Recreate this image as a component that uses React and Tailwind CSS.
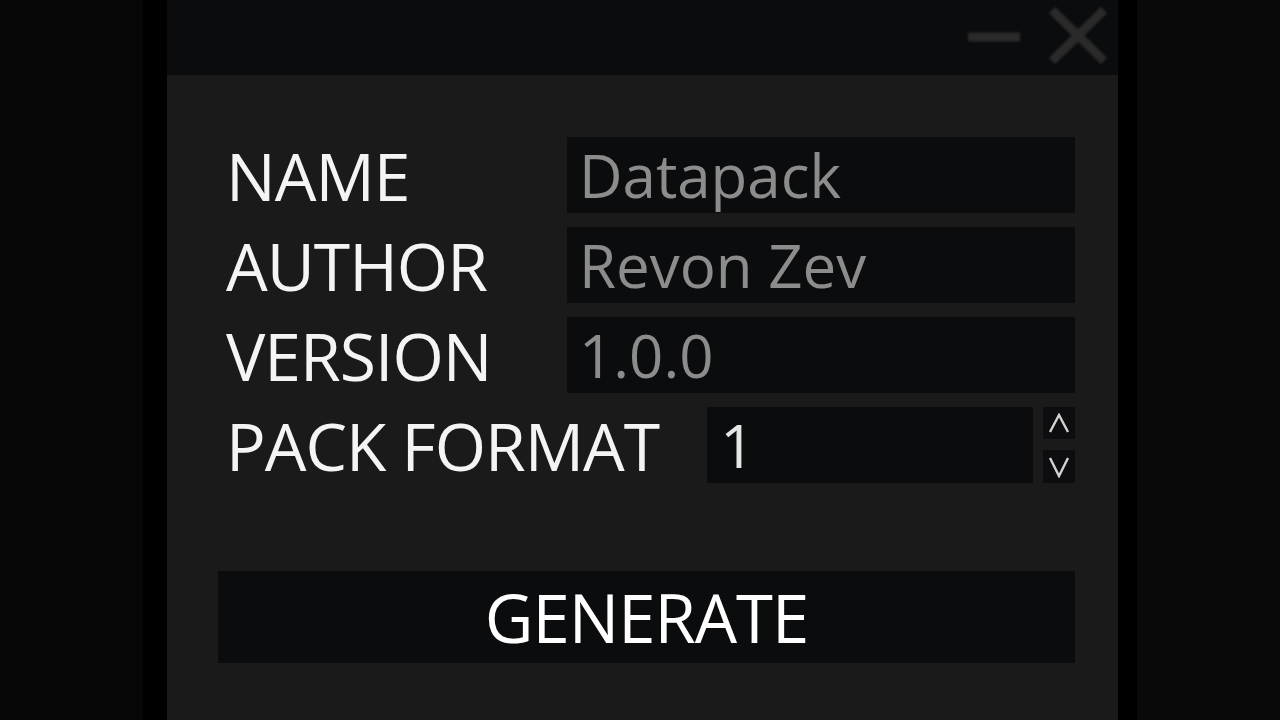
import React from "react";

const font = { fontFamily: '"Open Sans", "Noto Sans", sans-serif' };

function Field({ label, value }) {
  return (
    <div className="flex items-center h-[76px]">
      <div className="w-[349px] pl-[8px] text-[66px] leading-none text-[#f4f4f4] tracking-[-1px]">{label}</div>
      <div className="flex-1 h-full bg-[#0b0c0e] flex items-center pl-[12px] text-[60px] leading-none text-[#8c8c8c]">
        {value}
      </div>
    </div>
  );
}

export default function App() {
  return (
    <div className="flex h-[720px] w-[1280px] bg-black overflow-hidden" style={font}>
      <div className="w-[143px] h-full bg-[#070707]" />
      <div className="w-[24px] h-full bg-black" />
      <div className="w-[951px] h-full flex flex-col">
        <div className="h-[75px] bg-[#0b0c0e] flex items-start justify-end pr-[10px]">
          <svg width="142" height="75" viewBox="0 0 142 75" className="blur-[1px]">
            <line x1="2" y1="37" x2="54" y2="37" stroke="#2a2a2a" strokeWidth="9" />
            <line x1="86" y1="10" x2="138" y2="61" stroke="#2a2a2a" strokeWidth="9" />
            <line x1="138" y1="10" x2="86" y2="61" stroke="#2a2a2a" strokeWidth="9" />
          </svg>
        </div>
        <div className="flex-1 bg-[#1a1a1a] pl-[51px] pr-[43px] pt-[62px] flex flex-col">
          <div className="flex flex-col gap-[14px]">
            <Field label="NAME" value="Datapack" />
            <Field label="AUTHOR" value="Revon Zev" />
            <Field label="VERSION" value="1.0.0" />
            <div className="flex items-center h-[76px]">
              <div className="pl-[8px] pr-[48px] text-[66px] leading-none text-[#f4f4f4] tracking-[-1px] whitespace-nowrap">PACK FORMAT</div>
              <div className="flex-1 h-full bg-[#0b0c0e] flex items-center pl-[13px] text-[60px] leading-none text-[#e6e6e6]">
                1
              </div>
              <div className="w-[32px] h-full ml-[10px] flex flex-col justify-between">
                <div className="h-[32px] bg-[#0d0d0f] flex items-center justify-center">
                  <svg width="22" height="21" viewBox="0 0 22 21">
                    <polyline points="2,19 11,2 20,19" fill="none" stroke="#d2d2d2" strokeWidth="2.4" />
                  </svg>
                </div>
                <div className="h-[33px] bg-[#0d0d0f] flex items-center justify-center">
                  <svg width="22" height="22" viewBox="0 0 22 22">
                    <polyline points="2,2 11,20 20,2" fill="none" stroke="#d2d2d2" strokeWidth="2.4" />
                  </svg>
                </div>
              </div>
            </div>
          </div>
          <button className="mt-[88px] h-[92px] w-full bg-[#0b0c0e] text-[67px] leading-none text-white tracking-[-1px] flex items-center justify-center">
            GENERATE
          </button>
        </div>
      </div>
      <div className="w-[19px] h-full bg-black" />
      <div className="flex-1 h-full bg-[#090909]" />
    </div>
  );
}
